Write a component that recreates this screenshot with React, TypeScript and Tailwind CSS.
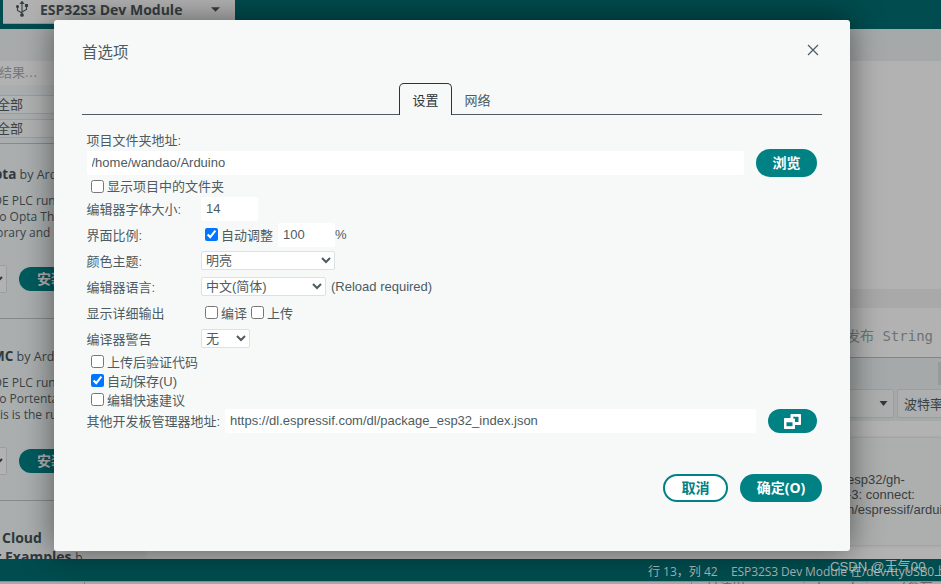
import type { ReactNode } from 'react';

const UI = "font-['Liberation_Sans','Noto_Sans_CJK_SC',sans-serif]";
const OPEN = "font-['Open_Sans','Noto_Sans_CJK_SC',sans-serif]";

function Check({ on = false, label }: { on?: boolean; label: string }) {
  return (
    <label className="flex items-center">
      <input type="checkbox" defaultChecked={on} className="mr-[3px] ml-1 size-[13px] shrink-0" />
      <span className="relative top-px">{label}</span>
    </label>
  );
}

function CheckRow({ on, label }: { on?: boolean; label: string }) {
  return (
    <div className="flex h-[19px] items-center">
      <Check on={on} label={label} />
    </div>
  );
}

function Row({ label, children }: { label: string; children: ReactNode }) {
  return (
    <div className="mb-[3px] flex h-[23px] items-center">
      <div className="relative top-px -ml-[0.5px] mr-[0.5px] w-[114px] shrink-0">{label}</div>
      {children}
    </div>
  );
}

function Select({ value, width }: { value: string; width: string }) {
  return (
    <select className={`mb-px h-[19px] rounded-[2px] border border-[#dae3e3] bg-white text-[13px] leading-none text-[#4e5b61] ${width}`}>
      <option>{value}</option>
    </select>
  );
}

function BoardCard({ name, indent, lines, lineIndents, height }: { name: string; indent: string; lines: string[]; lineIndents: string[]; height: string }) {
  return (
    <div className={`flex flex-col border-b border-[#858a8b] pt-[21px] ${height}`}>
      <div className={`h-[18px] text-[12.5px] leading-[18px] ${indent}`}>
        <b className="text-[13.5px] text-[#2f393d]">{name}</b> by Arduino
      </div>
      <div className="mt-[10px] text-[12px] leading-4">
        {lines.map((l, i) => (
          <div key={l} className={lineIndents[i]}>{l}</div>
        ))}
      </div>
      <div className="mt-[24px] flex h-7 items-center">
        <div className="flex h-7 w-[7px] items-center overflow-hidden rounded-r-[2px] border border-l-0 border-[#989f9f] bg-[#b2b2b2]">
          <svg viewBox="0 0 10 6" className="-ml-[7px] h-[6px] w-[10px] shrink-0">
            <path d="M1 1l4 4 4-4" fill="none" stroke="#2f393d" strokeWidth="2" />
          </svg>
        </div>
        <div className="ml-3 flex h-6 w-[70px] items-center rounded-full bg-[#005b5e] pb-px pl-[18px] text-[14px] font-bold text-[#b2b2b2]">安装</div>
      </div>
    </div>
  );
}

function Sidebar() {
  return (
    <div className="flex w-[147px] shrink-0 flex-col overflow-hidden bg-[#abaeae] whitespace-nowrap text-[#394347]">
      <div className="h-8 shrink-0 bg-[#a8abab]" />
      <div className="flex h-6 shrink-0 items-center bg-[#b2b2b2] text-[13px] text-[#757a7c]"><span className="-ml-px">结果</span><span className="tracking-[0.8px]">...</span></div>
      <div className="mt-[10px] flex h-[19px] shrink-0 items-center border-y border-[#989f9f] bg-[#b0b1b1] text-[13px]"><span className="-ml-[3px]">全部</span></div>
      <div className="mt-[5px] flex h-[19px] shrink-0 items-center border-y border-[#989f9f] bg-[#b0b1b1] text-[13px]"><span className="-ml-[3px]">全部</span></div>
      <div className="mt-[5px] h-px shrink-0 bg-[#858a8b]" />
      <BoardCard
        name="Opta" indent="-ml-[17px]" height="h-[175px] shrink-0"
        lines={['IDE PLC runtime', 'to Opta This', 'library and']}
        lineIndents={['-ml-[10px]', '-ml-[5px]', '-ml-[10px]']}
      />
      <BoardCard
        name="MC" indent="-ml-[8px] mt-[7px]" height="h-[182px] shrink-0"
        lines={['IDE PLC runtime', 'to Portenta MC', 'This is the runtime']}
        lineIndents={['-ml-[10px]', '-ml-[5px]', '-ml-[14px]']}
      />
      <div className="pt-[27px] text-[14px] leading-[19px]">
        <div className="ml-[2px] font-bold text-[#2f393d]">Cloud</div>
        <div className="-ml-[5px]"><b className="text-[#2f393d]">r Examples</b> <span className="text-[12px]">b</span></div>
      </div>
    </div>
  );
}

function Workspace() {
  return (
    <div className="flex flex-1 flex-col bg-[#b2b2b2] text-[#4e5658]">
      <div className="h-8 bg-[#a5a9a9]" />
      <div className="h-[228px]" />
      <div className="h-[19px] bg-[#a9a9a9]" />
      <div className="flex h-[50px] items-center border-b border-[#7f8686] pt-[8px] pl-[699px] font-['DejaVu_Sans_Mono','Noto_Sans_CJK_SC',monospace] text-[14px] whitespace-pre text-[#6b7475]">发布 String</div>
      <div className="flex h-[63px] flex-col bg-[#a5a9a9]">
        <div className="mt-[4px] ml-[791px] h-[23px] w-[3px] bg-[#959b9b]" />
        <div className="mt-[4px] ml-[640px] flex">
          <div className="flex h-[29px] w-[107px] items-center justify-end rounded-[2px] border border-[#989f9f] bg-[#adafaf] pr-[5px]">
            <svg viewBox="0 0 8 5" className="h-[5px] w-[9px]"><path d="M0 0h8L4 5z" fill="#2f393d" /></svg>
          </div>
          <div className={`ml-[3px] flex h-[29px] w-[44px] items-center overflow-hidden rounded-l-[2px] border border-r-0 border-[#989f9f] bg-[#adafaf] pt-[2px] pl-[6px] text-[13px] whitespace-nowrap text-[#394347] ${OPEN}`}>波特率</div>
        </div>
      </div>
      <div className={`mt-[17px] h-[107px] overflow-hidden bg-[#adaeae] pt-[34px] pl-[700px] text-[13px] leading-[15px] whitespace-nowrap text-[#394043] shadow-[0_0_3px_rgba(0,0,0,0.2)] ${UI}`}>
        <div>esp32/gh-</div>
        <div>-3: connect:</div>
        <div>n/espressif/arduino</div>
      </div>
    </div>
  );
}

function Preferences() {
  return (
    <div className={`absolute top-[20px] left-[54px] flex h-[531px] w-[796px] flex-col rounded-[3px] bg-[#f7f9f9] px-7 text-[13px] text-[#4e5b61] shadow-[0_0_32px_rgba(0,0,0,0.5)] ${UI}`}>
      <div className="flex h-[63px] shrink-0 items-center justify-between">
        <h1 className="pt-[2px] text-[15.5px]">首选项</h1>
        <svg viewBox="0 0 12 12" className="mr-[3px] mb-[3px] size-3"><path d="M1 1l10 10M11 1L1 11" stroke="#4e5b61" strokeWidth="1.2" /></svg>
      </div>
      <div className="flex h-8 shrink-0">
        <div className="w-[317px] border-b border-[#4e5b61]" />
        <div className="flex w-[53px] items-center justify-center rounded-t-[5px] border border-b-0 border-[#2c353a] pt-[2px] text-[#2c353a]">设置</div>
        <div className="flex-1 border-b border-[#4e5b61] pt-[8px] pl-[12.5px]">网络</div>
      </div>
      <div className="flex shrink-0 flex-col pt-[14px] pr-[5px] pl-[5px]">
        <div className="-ml-[0.5px] flex h-5 items-center pt-[4px]">项目文件夹地址:</div>
        <div className="flex h-7 items-center">
          <input defaultValue="/home/wandao/Arduino" className="h-6 w-[657px] rounded-[2px] bg-white px-[4.5px] pb-[2px]" />
          <button className="ml-3 h-7 w-[61px] rounded-full bg-[#008184] text-[14px] font-bold text-white">浏览</button>
        </div>
        <div className="flex h-5 items-center pb-[2px]"><Check label="显示项目中的文件夹" /></div>
        <div className="flex h-6 items-center">
          <div className="relative top-px -ml-[0.5px] mr-[0.5px] w-[114px]">编辑器字体大小:</div>
          <input defaultValue="14" className="h-6 w-[57px] rounded-[2px] bg-white px-[5px] pb-[2px]" />
        </div>
        <div className="mt-[2px] mb-[2px] flex h-6 items-center">
          <div className="relative top-px -ml-[0.5px] mr-[0.5px] w-[114px]">界面比例:</div>
          <div className="pb-[1px]"><Check on label="自动调整" /></div>
          <input defaultValue="100" className="ml-[5px] h-6 w-[57px] rounded-[2px] bg-white px-[5px] pb-[2px]" />%
        </div>
        <Row label="颜色主题:"><Select value="明亮" width="w-[134px]" /></Row>
        <Row label="编辑器语言:"><Select value="中文(简体)" width="w-[125px]" /><span className="ml-[5px]">(Reload required)</span></Row>
        <Row label="显示详细输出"><Check label="编译" /><Check label="上传" /></Row>
        <Row label="编译器警告"><Select value="无" width="w-[49px]" /></Row>
        <div className="-mt-px">
          <CheckRow label="上传后验证代码" />
          <CheckRow on label="自动保存(U)" />
          <CheckRow label="编辑快速建议" />
        </div>
        <div className="flex h-6 items-center">
          <div className="relative top-px -ml-[0.5px] mr-[0.5px] w-[138px]">其他开发板管理器地址:</div>
          <input defaultValue="https://dl.espressif.com/dl/package_esp32_index.json" className="h-6 w-[531px] rounded-[2px] bg-white px-[5px] pb-[2px]" />
          <button className="ml-3 flex h-6 w-[49px] items-center justify-center rounded-full bg-[#008184]">
            <svg viewBox="0 0 17 15" className="mt-px h-[15px] w-[17px]">
              <rect x="6.500" width="10.500" height="11" rx="0.800" fill="#fff" />
              <path d="M9.500 2.800h5v5.200h-5z" fill="#008184" />
              <rect y="4" width="11" height="11" rx="0.800" fill="#fff" />
              <path d="M9.500 2.800h1.200v2h-1.200z" fill="#008184" />
              <path d="M2.500 8.300h6v3.900h-6z" fill="#008184" />
            </svg>
          </button>
        </div>
      </div>
      <div className="mt-[41px] flex h-7 shrink-0 justify-end gap-3 text-[14px] font-bold">
        <button className="w-[65px] rounded-full border-2 border-[#008184] bg-white text-[#008184]">取消</button>
        <button className={`w-[82px] rounded-full bg-[#008184] pb-[2px] text-white ${OPEN}`}>确定(O)</button>
      </div>
    </div>
  );
}

export default function App() {
  return (
    <div className={`relative flex h-[584px] w-[941px] flex-col overflow-hidden bg-[#a9a9a9] ${OPEN}`}>
      <header className="h-[29px] shrink-0 bg-[#004c4e] pl-[3px]">
        <div className="flex h-6 w-[232px] items-center border-b border-[#7da0a1] bg-[#b2b2b2] pr-[15px] pb-[4px] pl-[12px] text-[14px] font-bold text-[#363f43]">
          <svg viewBox="0 0 14 16" className="mb-[2px] h-4 w-[14px]" fill="none" stroke="#363f43" strokeWidth="1.1">
            <path d="M7 2v12M7 12L2.500 9.500V6M7 11L11.500 8.500V5" />
            <path d="M5.500 2.500L7 .5l1.500 2z" fill="#363f43" />
            <circle cx="7" cy="14" r="1.300" fill="#363f43" />
            <circle cx="2.500" cy="5.500" r="1" fill="#363f43" />
            <path d="M10.500 3.500h2v2h-2z" fill="#363f43" />
          </svg>
          <span className="ml-[11px] flex-1">ESP32S3 Dev Module</span>
          <svg viewBox="0 0 8 4" className="h-[5px] w-[9px]"><path d="M0 0h8L4 4z" fill="#363f43" /></svg>
        </div>
      </header>
      <main className="flex h-[530px] shrink-0">
        <Sidebar />
        <Workspace />
      </main>
      <footer className="flex h-[22px] shrink-0 items-center bg-[#004c4e] pt-[3px] pl-[648px] text-[12px] whitespace-nowrap text-[#a9b2b2]">
        <span className="w-[83px] shrink-0">行 13，列 42</span>
        <span className="tracking-[-0.1px]">ESP32S3 Dev Module 在/dev/ttyUSB0上</span>
      </footer>
      <div className="flex h-[3px] shrink-0 items-start overflow-hidden border-t border-[#8c8c8c] pl-[84px]">
        <div className="h-3 w-px shrink-0 bg-[#888]" />
        <div className="ml-[606px] h-3 w-px shrink-0 bg-[#888]" />
        <div className="ml-[14px] h-[14px] shrink-0 font-['DejaVu_Sans_Mono','Noto_Sans_CJK_SC',monospace] text-[13px] leading-[10px] whitespace-nowrap text-[#666]">且适用 rosserial_arduino （含有 ROS</div>
      </div>
      <Preferences />
      <div className="absolute top-[558px] left-[830px] text-[13.2px] leading-[18px] whitespace-nowrap text-[#c5cccc] opacity-80 font-['Liberation_Sans','Noto_Sans_CJK_SC',sans-serif]">CSDN @王气00</div>
    </div>
  );
}
